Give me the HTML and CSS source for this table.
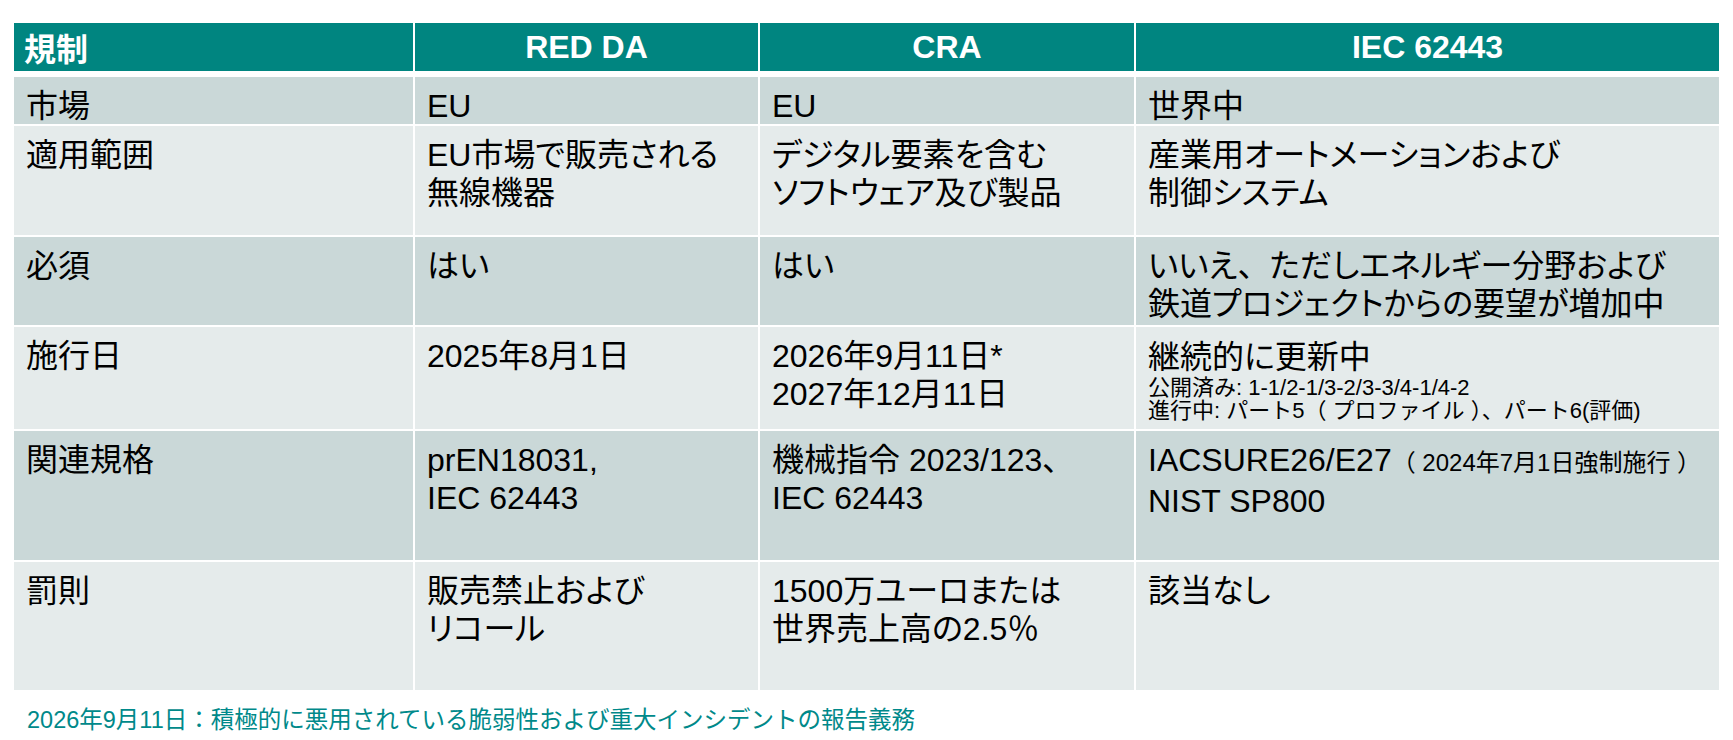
FILE: index.html
```html
<!DOCTYPE html>
<html lang="ja">
<head>
<meta charset="utf-8">
<title>規制比較</title>
<link rel="stylesheet" href="styles.css">
</head>
<body>
<div class="page">
  <div class="grid">
    <div class="hd first">規制</div>
    <div class="hd">RED DA</div>
    <div class="hd">CRA</div>
    <div class="hd">IEC 62443</div>

    <div class="row dark">
      <div class="c">市場</div>
      <div class="c">EU</div>
      <div class="c">EU</div>
      <div class="c">世界中</div>
    </div>

    <div class="row light">
      <div class="c">適用範囲</div>
      <div class="c">EU市場で販売される<br>無線機器</div>
      <div class="c">デジタル要素を含む<br>ソフトウェア及び製品</div>
      <div class="c">産業用オートメーションおよび<br>制御システム</div>
    </div>

    <div class="row dark">
      <div class="c">必須</div>
      <div class="c">はい</div>
      <div class="c">はい</div>
      <div class="c">いいえ<span class="fw">、</span>ただしエネルギー分野および<br>鉄道プロジェクトからの要望が増加中</div>
    </div>

    <div class="row light">
      <div class="c">施行日</div>
      <div class="c">2025年8月1日</div>
      <div class="c">2026年9月11日*<br>2027年12月11日</div>
      <div class="c">
        <div class="big">継続的に更新中</div>
        <div class="small">公開済み: 1-1/2-1/3-2/3-3/4-1/4-2</div>
        <div class="small">進行中: パート5（ プロファイル ）、パート6(評価)</div>
      </div>
    </div>

    <div class="row dark">
      <div class="c">関連規格</div>
      <div class="c">prEN18031,<br>IEC 62443</div>
      <div class="c">機械指令 2023/123、<br>IEC 62443</div>
      <div class="c">IACSURE26/E27<span class="paren">（ 2024年7月1日強制施行 ）</span><br>NIST SP800</div>
    </div>

    <div class="row light">
      <div class="c">罰則</div>
      <div class="c">販売禁止および<br>リコール</div>
      <div class="c">1500万ユーロまたは<br>世界売上高の2.5％</div>
      <div class="c">該当なし</div>
    </div>
  </div>
  <p class="note">2026年9月11日：積極的に悪用されている脆弱性および重大インシデントの報告義務</p>
</div>
</body>
</html>
```

FILE: styles.css
```css
html, body {
  margin: 0;
  background: #ffffff;
}

body {
  font-family: "Liberation Sans", "Noto Sans CJK JP", sans-serif;
  color: #000;
}

.page {
  padding: 23px 0 0 14px;
}

.grid {
  display: grid;
  width: 1705px;
  grid-template-columns: 399px 343px 374px 583px;
  grid-template-rows: 52px 47px 109px 88px 102px 129px 128px;
  column-gap: 2px;
  row-gap: 2px;
}

.row {
  display: contents;
}

.hd {
  background: #008580;
  color: #ffffff;
  font-weight: bold;
  font-size: 32px;
  display: flex;
  align-items: center;
  justify-content: center;
  margin-bottom: 4px;
}

.hd.first {
  justify-content: flex-start;
  padding-left: 10px;
}

.c {
  padding: 10px 12px 0;
  font-size: 32px;
  line-height: 38px;
  white-space: nowrap;
  font-feature-settings: "palt";
}

.dark .c {
  background: #cad8d8;
}

.light .c {
  background: #e5ebeb;
}

.fw {
  font-feature-settings: normal;
}

.big {
  margin-top: 1px;
}

.small {
  font-size: 22px;
  line-height: 23px;
  font-feature-settings: normal;
}

.paren {
  font-size: 24px;
  font-feature-settings: normal;
}

.note {
  margin: 16px 0 0;
  padding-left: 13px;
  font-size: 23.5px;
  line-height: 28px;
  color: #00898a;
}
```
